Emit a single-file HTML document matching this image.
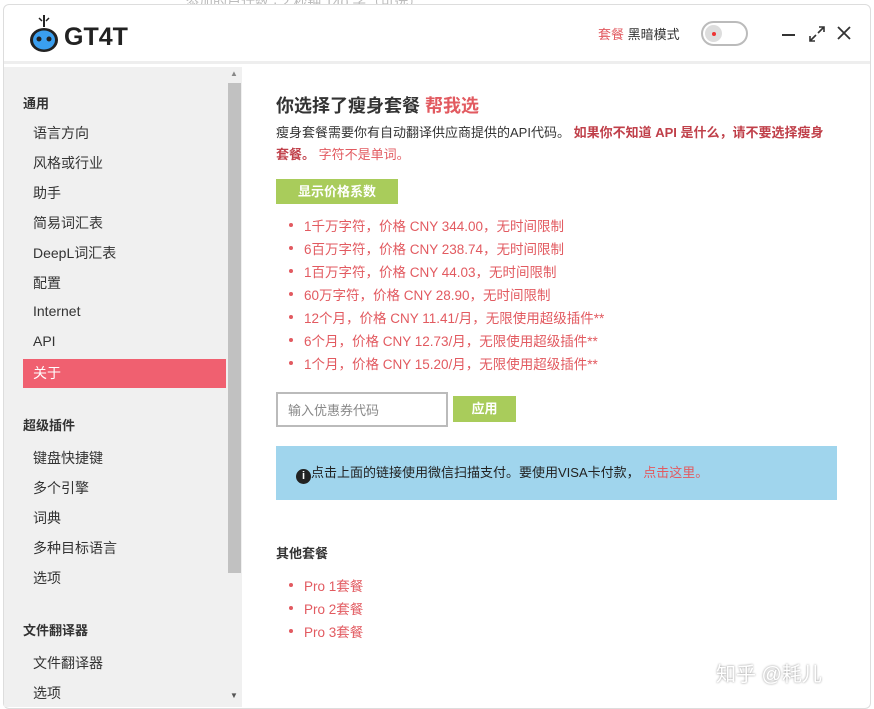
<!DOCTYPE html><html><head><meta charset="utf-8"><style>
*{margin:0;padding:0;box-sizing:border-box}
body{width:874px;height:705px;overflow:hidden;background:#fff;font-family:"Liberation Sans","Noto Sans CJK SC",sans-serif;position:relative;font-size:14px;color:#333}
.top{position:absolute;left:185px;top:-8px;color:#bbb;font-size:14px}
.win{position:absolute;left:3px;top:4px;width:868px;height:705px;border:1px solid #ddd;border-radius:6px;background:#fff}
.hdr{position:absolute;left:0;top:0;width:866px;height:59px;border-bottom:3px solid #eee}
.side{position:absolute;left:0;top:62px;width:238px;height:640px;background:#f0f0f0}
.side div{position:absolute;font-size:14px;color:#333}
.side .h{left:19px;font-weight:bold;font-size:13px}
.side .i{left:29px}
.main{position:absolute;left:276px}
.red{color:#e25a60}
ul{list-style:none}
li{position:relative;padding-left:28px;color:#e25a60;font-size:13.5px;height:23px}
li:before{content:"";position:absolute;left:13px;top:8px;width:4px;height:4px;border-radius:50%;background:#e25a60}
</style></head><body>
<div class="top">添加的户计数 · 2 秒钟 140 字（可选）</div>
<div class="win">
<div class="hdr">
<svg style="position:absolute;left:24px;top:8px" width="32" height="40" viewBox="0 0 32 40"><line x1="16" y1="2" x2="16" y2="14" stroke="#222" stroke-width="2"/><line x1="11" y1="5" x2="14" y2="8" stroke="#222" stroke-width="1.5"/><line x1="21" y1="5" x2="18" y2="8" stroke="#222" stroke-width="1.5"/><ellipse cx="16" cy="27" rx="14" ry="12" fill="#222"/><ellipse cx="16" cy="27" rx="11" ry="9.5" fill="#3a9ff0"/><circle cx="11" cy="26" r="2.5" fill="#222"/><circle cx="21" cy="26" r="2.5" fill="#222"/></svg>
<div style="position:absolute;left:60px;top:18px;font-size:25px;font-weight:bold;color:#222">GT4T</div>
<div style="position:absolute;left:594px;top:19px;font-size:13px"><span class="red">套餐</span> <span style="color:#333">黑暗模式</span></div>
<div style="position:absolute;left:697px;top:16px;width:47px;height:25px;border:2px solid #bbb;border-radius:13px"><div style="position:absolute;left:2px;top:2px;width:17px;height:17px;border-radius:50%;background:#ddd"></div><div style="position:absolute;left:9px;top:9px;width:4px;height:4px;border-radius:50%;background:#e33"></div></div>
<div style="position:absolute;left:778px;top:29px;width:13px;height:2px;background:#333"></div>
<svg style="position:absolute;left:804px;top:20px" width="18" height="18" viewBox="0 0 18 18" fill="none" stroke="#333" stroke-width="1.6"><path d="M10 8 16 2M11 2h5v5M8 10 2 16M2 11v5h5"/></svg>
<svg style="position:absolute;left:833px;top:21px" width="14" height="14" stroke="#333" stroke-width="1.8"><path d="M1 1 13 13M13 1 1 13"/></svg>
</div>
<div class="side">
<div class="h" style="top:26px">通用</div>
<div class="i" style="top:56px">语言方向</div>
<div class="i" style="top:86px">风格或行业</div>
<div class="i" style="top:116px">助手</div>
<div class="i" style="top:146px">简易词汇表</div>
<div class="i" style="top:176px">DeepL词汇表</div>
<div class="i" style="top:206px">配置</div>
<div class="i" style="top:236px">Internet</div>
<div class="i" style="top:266px">API</div>
<div style="left:19px;top:292px;width:203px;height:29px;background:#f06070"></div>
<div class="i" style="top:296px;color:#fff">关于</div>
<div class="h" style="top:348px">超级插件</div>
<div class="i" style="top:381px">键盘快捷键</div>
<div class="i" style="top:411px">多个引擎</div>
<div class="i" style="top:441px">词典</div>
<div class="i" style="top:471px">多种目标语言</div>
<div class="i" style="top:501px">选项</div>
<div class="h" style="top:553px">文件翻译器</div>
<div class="i" style="top:586px">文件翻译器</div>
<div class="i" style="top:616px">选项</div>
<div style="left:226px;top:2px;font-size:8px;color:#888">▲</div>
<div style="left:226px;top:624px;font-size:8px;color:#555">▼</div>
<div style="left:224px;top:16px;width:13px;height:490px;background:#c1c1c1"></div>
</div>
</div>
<div class="main" style="top:92px;font-size:18px;font-weight:bold;color:#333">你选择了瘦身套餐 <span class="red">帮我选</span></div>
<div class="main" style="top:122px;width:552px;font-size:13px;line-height:22px">瘦身套餐需要你有自动翻译供应商提供的API代码。 <b style="color:#c0404a">如果你不知道 API 是什么，请不要选择瘦身套餐。</b> <span class="red">字符不是单词。</span></div>
<div class="main" style="top:179px;width:122px;height:25px;background:#a9cc5b;color:#fff;font-weight:bold;font-size:13px;text-align:center;line-height:25px">显示价格系数</div>
<ul class="main" style="top:215px">
<li>1千万字符，价格 CNY 344.00，无时间限制</li>
<li>6百万字符，价格 CNY 238.74，无时间限制</li>
<li>1百万字符，价格 CNY 44.03，无时间限制</li>
<li>60万字符，价格 CNY 28.90，无时间限制</li>
<li>12个月，价格 CNY 11.41/月，无限使用超级插件**</li>
<li>6个月，价格 CNY 12.73/月，无限使用超级插件**</li>
<li>1个月，价格 CNY 15.20/月，无限使用超级插件**</li>
</ul>
<div class="main" style="top:392px;width:172px;height:35px;border:2px solid #bbb;color:#888;font-size:13px;padding:6px 10px">输入优惠券代码</div>
<div class="main" style="left:453px;top:396px;width:63px;height:26px;background:#a9cc5b;color:#fff;font-weight:bold;font-size:13px;text-align:center;line-height:26px">应用</div>
<div class="main" style="top:446px;width:561px;height:54px;background:#a0d5ed;font-size:13px;padding:16px 0 0 20px;color:#222"><span style="display:inline-block;width:15px;height:15px;border-radius:50%;background:#222;color:#fff;font-size:11px;font-weight:bold;text-align:center;line-height:15px;vertical-align:-2px">i</span>点击上面的链接使用微信扫描支付。要使用VISA卡付款， <span class="red">点击这里。</span></div>
<div class="main" style="top:543px;font-size:13px;font-weight:bold">其他套餐</div>
<ul class="main" style="top:575px">
<li>Pro 1套餐</li><li>Pro 2套餐</li><li>Pro 3套餐</li>
</ul>
<div style="position:absolute;left:716px;top:658px;font-size:20px;color:#fff;text-shadow:0 0 2px #888">知乎 @耗儿</div>
</body></html>
